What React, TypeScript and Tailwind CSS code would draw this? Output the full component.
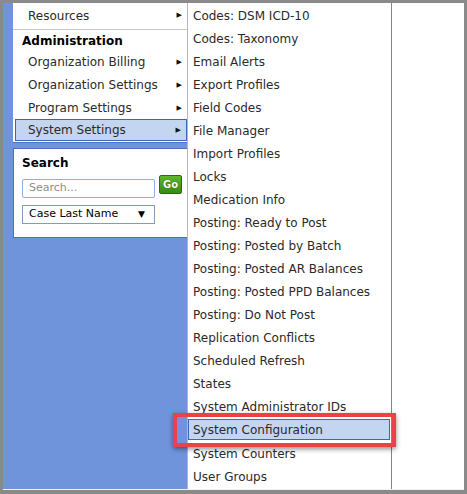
import React from "react";

const menuItems = [
  { label: "Organization Billing" },
  { label: "Organization Settings" },
  { label: "Program Settings" },
];

const subItems = [
  "Codes: DSM ICD-10",
  "Codes: Taxonomy",
  "Email Alerts",
  "Export Profiles",
  "Field Codes",
  "File Manager",
  "Import Profiles",
  "Locks",
  "Medication Info",
  "Posting: Ready to Post",
  "Posting: Posted by Batch",
  "Posting: Posted AR Balances",
  "Posting: Posted PPD Balances",
  "Posting: Do Not Post",
  "Replication Conflicts",
  "Scheduled Refresh",
  "States",
  "System Administrator IDs",
  "System Configuration",
  "System Counters",
  "User Groups",
];

function Arrow() {
  return <span className="absolute right-[5px] top-1/2 -translate-y-1/2 text-[7px] leading-none text-[#111]">▶</span>;
}

export default function App() {
  return (
    <div
      className="w-[467px] h-[494px] bg-[#8a8a8a] pt-[3px] pl-[3px] pr-[3px] pb-[4px] text-[12px] text-[#2a2a2a]"
      style={{ fontFamily: '"DejaVu Sans", Verdana, sans-serif' }}
    >
      <div className="flex h-full border-b border-[#f2f2f2] bg-white">
        {/* Left column */}
        <div className="w-[184px] bg-[#7094dc] pl-[10px] flex flex-col">
          {/* Menu panel */}
          <div className="bg-white pb-[1px] border-b border-[#4d70c4]">
            <div className="relative h-[24px] flex items-center pl-[15px] pt-[1px]">
              Resources
              <Arrow />
            </div>
            <div className="h-px bg-[#c8c8c8] mt-[2px]" />
            <div className="h-[20px] flex items-center pl-[9px] pt-[2px] font-bold text-[12px] text-black">
              Administration
            </div>
            {menuItems.map((m) => (
              <div key={m.label} className="relative h-[23px] flex items-center pl-[15px]">
                {m.label}
                <Arrow />
              </div>
            ))}
            <div className="relative h-[22px] ml-[2px] flex items-center pl-[12px] bg-[#c3d5f0] border border-[#3f64b8]">
              System Settings
              <Arrow />
            </div>
          </div>
          {/* Search panel */}
          <div className="mt-[5px] bg-white border border-r-0 border-[#4d70c4] h-[90px] pl-[8px] pt-[5px]">
            <div className="font-bold text-[12px] text-black leading-[18px]">Search</div>
            <div className="flex items-start mt-[3px]">
              <div className="mt-[4px] w-[133px] h-[19px] rounded-[2px] border border-[#8cb1ea] flex items-center pl-[6px] text-[#8c8c8c] text-[11px]">
                Search...
              </div>
              <div className="ml-[4px] w-[23px] h-[19px] rounded-[2px] border border-[#2b6a10] bg-gradient-to-b from-[#5cb82a] to-[#3a8a14] flex items-center justify-center text-[10px] font-bold text-white [text-shadow:0_0_1px_#1a3a08]">
                Go
              </div>
            </div>
            <div className="mt-[7px] w-[133px] h-[19px] border border-[#7f9db9] flex items-center justify-between pl-[6px] pr-[9px] text-[11px] text-black">
              <span>Case Last Name</span>
              <span className="text-[9px]">▼</span>
            </div>
          </div>
        </div>
        {/* Submenu */}
        <div className="w-[205px] border-l border-[#b8b8b8] border-r border-r-[#858585] pt-[1px]">
          {subItems.map((s) => {
            const active = s === "System Configuration";
            return active ? (
              <div key={s} className="relative h-[23px]">
                <div className="h-[21px] mt-[1px] mr-[1px] bg-[#c3d5f0] border border-[#3f64b8] flex items-center pl-[4px]">
                  {s}
                </div>
                <div className="absolute left-[-15px] right-[-5px] top-[-6px] bottom-[-5px] border-[4px] border-[#ea4248] shadow-[0_2px_5px_rgba(0,0,0,0.45)]" />
              </div>
            ) : (
              <div key={s} className="h-[23px] flex items-center pl-[5px]">
                {s}
              </div>
            );
          })}
        </div>
        <div className="flex-1 bg-white" />
      </div>
    </div>
  );
}
